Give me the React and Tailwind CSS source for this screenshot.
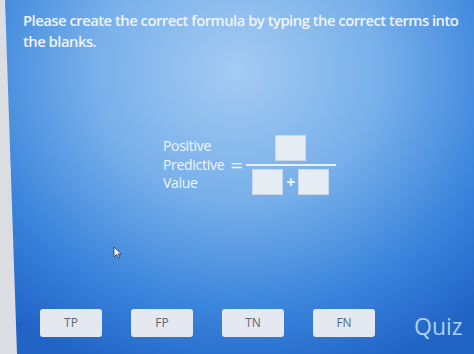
import React from 'react'

const box = 'w-[31px] h-[26px] bg-[#e6ecf4] border border-[#c9d8ea]'

export default function App() {
  return (
    <div
      className="relative w-[474px] h-[354px] overflow-hidden flex flex-col bg-[radial-gradient(ellipse_75%_90%_at_50%_20%,#a4cbf2_0%,#78b0ea_40%,#3a84dc_75%,#2164c6_100%)]"
      style={{ fontFamily: '"Open Sans", "Noto Sans", sans-serif' }}
    >
      {/* gray bezel on the left */}
      <svg className="absolute left-0 top-0" width="24" height="354" viewBox="0 0 24 354">
        <polygon points="0,0 5,0 17,354 0,354" fill="#dcdde2" />
      </svg>

      {/* Prompt */}
      <p className="pl-[23px] pt-[10px] whitespace-nowrap text-[14.8px] leading-[21px] font-semibold text-[#eef4fb] tracking-[-0.5px]">
        Please create the correct formula by typing the correct terms into
        <br />
        the blanks.
      </p>

      {/* Formula */}
      <div className="flex items-center pl-[163px] mt-[83px]">
        <div className="flex flex-col text-[14px] leading-[18.5px] text-[#eef4fb] tracking-[-0.3px]">
          <span>Positive</span>
          <span>Predictive</span>
          <span>Value</span>
        </div>
        <span className="ml-[6px] text-[22px] leading-none text-[#eef4fb] -mt-[2px]">=</span>
        <div className="ml-[3px] flex flex-col items-center">
          <div className={box} />
          <div className="w-[90px] h-[2px] bg-[#e8f0fa] my-[3px]" />
          <div className="flex items-center">
            <div className={box} />
            <span className="mx-[3px] text-[16px] font-bold leading-none text-[#eef4fb]">+</span>
            <div className={box} />
          </div>
        </div>
      </div>

      {/* cursor */}
      <svg className="absolute left-[113px] top-[246px]" width="10" height="13" viewBox="0 0 10 13">
        <path d="M1 1 L1 11 L3.5 8.5 L5.5 12 L7 11.3 L5 8 L8.5 8 Z" fill="#eef2f8" stroke="#334" strokeWidth="0.8" />
      </svg>

      {/* answer chips */}
      <div className="mt-auto mb-[16px] flex items-center pl-[40px]">
        <div className="flex gap-[29px]">
          {['TP', 'FP', 'TN', 'FN'].map((t) => (
            <div
              key={t}
              className="w-[62px] h-[28px] rounded-[3px] bg-[#e4e9f1] flex items-center justify-center text-[12px] text-[#5b6470]"
            >
              {t}
            </div>
          ))}
        </div>
        <span className="ml-[39px] text-[23px] leading-none text-[#a9d3f6] mt-[8px]">Quiz</span>
      </div>
    </div>
  )
}
